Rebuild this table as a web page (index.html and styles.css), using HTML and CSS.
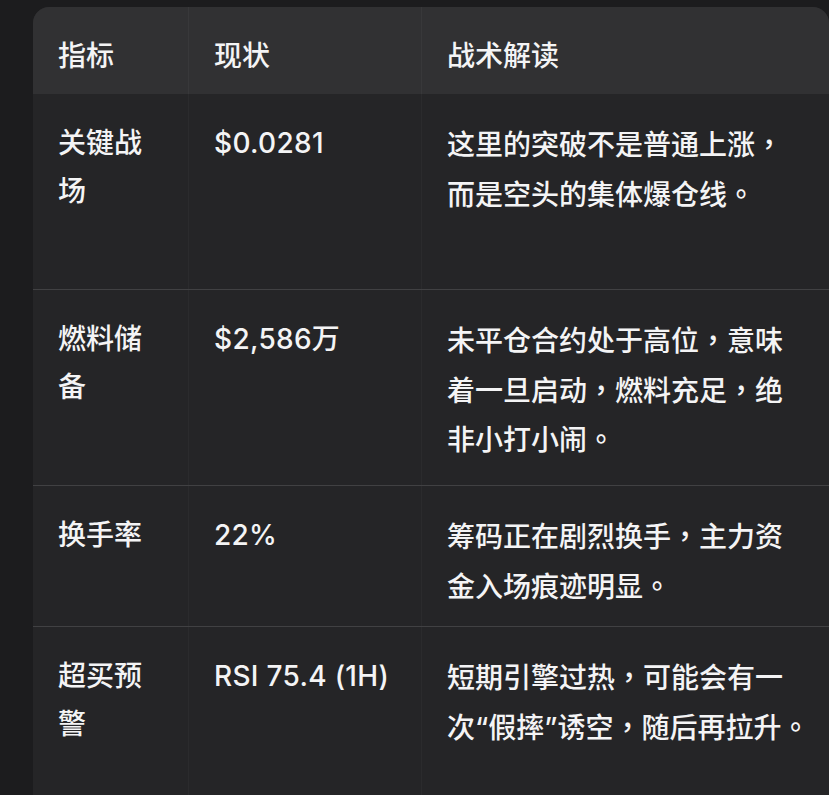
FILE: index.html
```html
<!DOCTYPE html>
<html lang="zh-CN">
<head>
<meta charset="utf-8">
<title>指标</title>
<link rel="stylesheet" href="styles.css">
</head>
<body>
<div class="page">
  <div class="table">
    <div class="row head">
      <div class="cell">指标</div>
      <div class="cell">现状</div>
      <div class="cell">战术解读</div>
    </div>
    <div class="row r1">
      <div class="cell">关键战场</div>
      <div class="cell num">$0.0281</div>
      <div class="cell">这里的突破不是普通上涨<span class="pn" lang="zh-TW">，</span>而是空头的集体爆仓线<span class="pn" lang="zh-TW">。</span></div>
    </div>
    <div class="row r2 sep">
      <div class="cell">燃料储备</div>
      <div class="cell num">$2,586万</div>
      <div class="cell">未平仓合约处于高位<span class="pn" lang="zh-TW">，</span>意味着一旦启动<span class="pn" lang="zh-TW">，</span>燃料充足<span class="pn" lang="zh-TW">，</span>绝非小打小闹<span class="pn" lang="zh-TW">。</span></div>
    </div>
    <div class="row r3 sep">
      <div class="cell">换手率</div>
      <div class="cell num">22%</div>
      <div class="cell">筹码正在剧烈换手<span class="pn" lang="zh-TW">，</span>主力资金入场痕迹明显<span class="pn" lang="zh-TW">。</span></div>
    </div>
    <div class="row r4 sep">
      <div class="cell">超买预警</div>
      <div class="cell num">RSI 75.4 (1H)</div>
      <div class="cell">短期引擎过热<span class="pn" lang="zh-TW">，</span>可能会有一次“假摔”诱空<span class="pn" lang="zh-TW">，</span>随后再拉升<span class="pn" lang="zh-TW">。</span></div>
    </div>
  </div>
</div>
</body>
</html>
```

FILE: styles.css
```css
html, body {
  margin: 0;
  padding: 0;
  background: #1c1c1e;
}

.page {
  height: 795px;
  overflow: hidden;
  padding: 7px 0 0 33px;
  box-sizing: border-box;
  font-family: "Inter", "Noto Sans CJK SC", sans-serif;
  font-size: 28px;
  font-weight: 500;
  line-height: 47.5px;
  color: #f4f4f5;
}

.table {
  width: 796px;
  border-radius: 16px 16px 0 0;
  overflow: hidden;
  background: #252527;
}

.row {
  display: grid;
  grid-template-columns: 155px 233px 408px;
  box-sizing: border-box;
}

.cell {
  padding: 26px 25px 0 25px;
  box-sizing: border-box;
}

.cell:last-child {
  padding-right: 19px;
}

.cell + .cell {
  border-left: 1px solid #2b2b2d;
}

.num {
  letter-spacing: 0.3px;
}

.pn {
  font-family: "Noto Sans CJK TC", sans-serif;
}

.head {
  background: #313133;
  height: 87px;
}

.head .cell + .cell {
  border-left-color: #38383a;
}

.sep {
  border-top: 1px solid #414143;
}

.r1 { height: 195px; }
.r2 { height: 196px; }
.r3 { height: 141px; }
.r4 { height: 200px; }
```
